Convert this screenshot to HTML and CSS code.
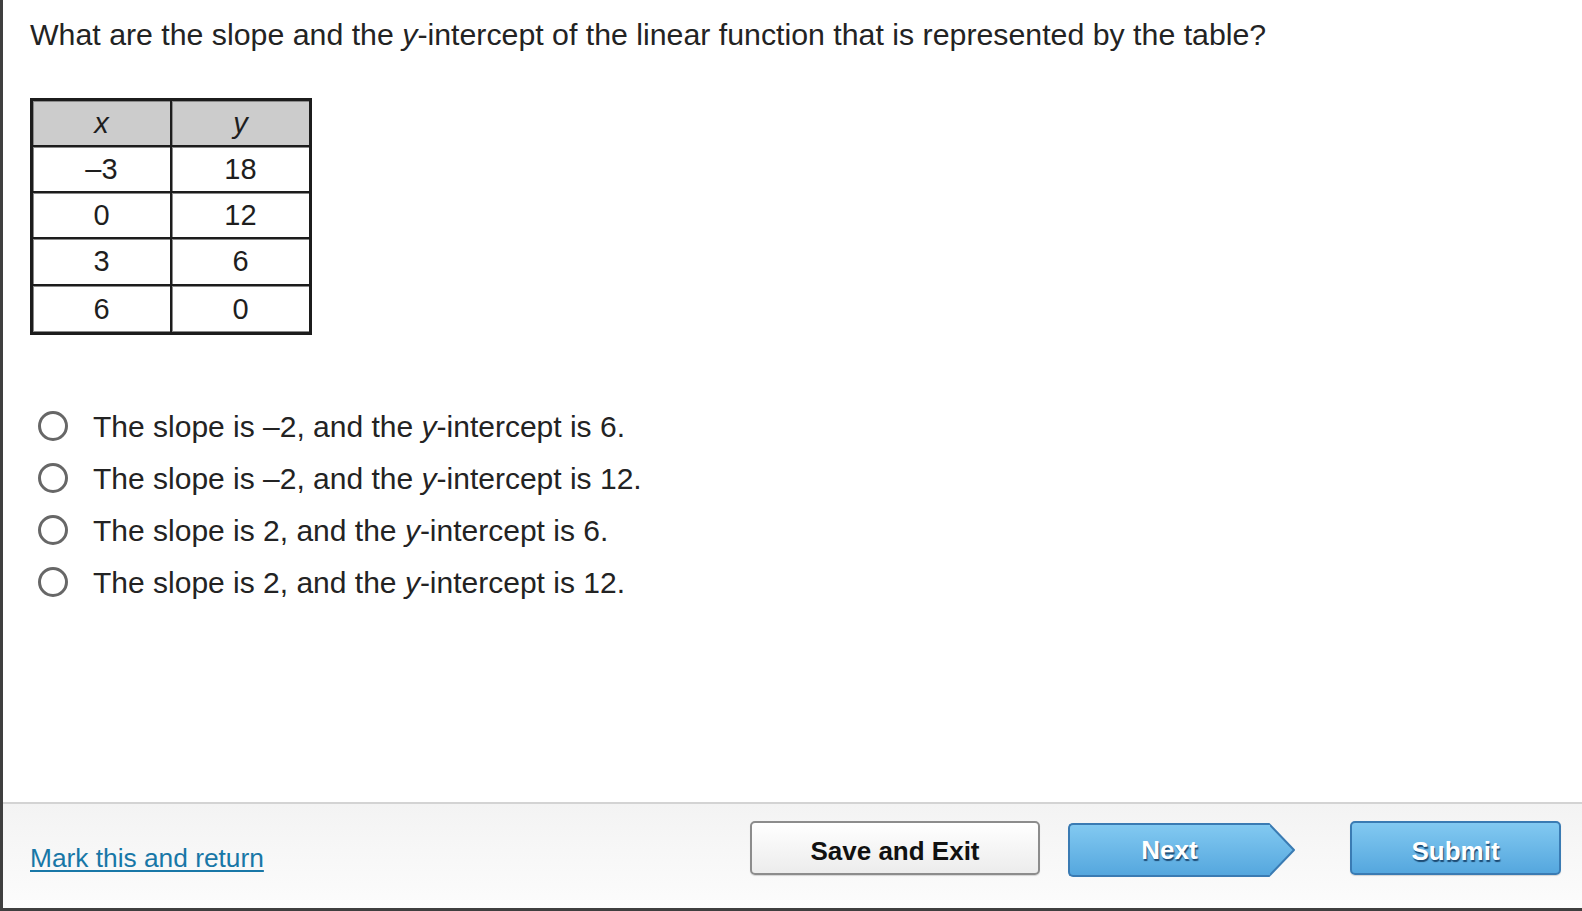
FILE: index.html
```html
<!DOCTYPE html>
<html lang="en">
<head>
<meta charset="utf-8">
<title>Question</title>
<link rel="stylesheet" href="styles.css">
</head>
<body>
<div class="frame">
  <main class="content">
    <p class="question">What are the slope and the <i>y</i>-intercept of the linear function that is represented by the table?</p>
    <table class="data">
      <thead>
        <tr><th><i>x</i></th><th><i>y</i></th></tr>
      </thead>
      <tbody>
        <tr><td>–3</td><td>18</td></tr>
        <tr><td>0</td><td>12</td></tr>
        <tr><td>3</td><td>6</td></tr>
        <tr><td>6</td><td>0</td></tr>
      </tbody>
    </table>
    <ul class="options">
      <li class="option"><span class="radio"></span><span class="label">The slope is –2, and the <i>y</i>-intercept is 6.</span></li>
      <li class="option"><span class="radio"></span><span class="label">The slope is –2, and the <i>y</i>-intercept is 12.</span></li>
      <li class="option"><span class="radio"></span><span class="label">The slope is 2, and the <i>y</i>-intercept is 6.</span></li>
      <li class="option"><span class="radio"></span><span class="label">The slope is 2, and the <i>y</i>-intercept is 12.</span></li>
    </ul>
  </main>
  <footer class="footer">
    <a class="mark" href="#">Mark this and return</a>
    <button class="btn btn-save">Save and Exit</button>
    <button class="btn-next">
      <span class="next-body">Next</span>
      <svg class="next-arrow" width="28" height="54" viewBox="0 0 28 54" aria-hidden="true">
        <defs>
          <linearGradient id="ng" x1="0" y1="0" x2="0" y2="1">
            <stop offset="0" stop-color="#82c9f1"/>
            <stop offset="1" stop-color="#55a7de"/>
          </linearGradient>
        </defs>
        <polygon points="0,1 1,1 26,27 1,53 0,53" fill="url(#ng)" stroke="#3a7bb3" stroke-width="2" stroke-linejoin="round"/>
        <rect x="0" y="2" width="2" height="50" fill="url(#ng)"/>
      </svg>
    </button>
    <button class="btn btn-submit">Submit</button>
  </footer>
</div>
</body>
</html>
```

FILE: styles.css
```css
html, body {
  margin: 0;
  padding: 0;
  background: #ffffff;
}

body {
  font-family: "Liberation Sans", Arial, Helvetica, sans-serif;
  color: #222222;
}

.frame {
  box-sizing: border-box;
  height: 911px;
  border-left: 3px solid #3f3f3f;
  border-bottom: 3px solid #3f3f3f;
  display: flex;
  flex-direction: column;
}

.content {
  flex: 1;
  padding-left: 27px;
  background: #ffffff;
}

.question {
  margin: 18px 0 0 0;
  font-size: 30.3px;
  line-height: 34px;
  color: #232323;
}

.data {
  margin-top: 46px;
  border-collapse: collapse;
  border: 3px solid #1c1c1c;
  font-size: 29px;
  color: #1e1e1e;
}

.data th,
.data td {
  width: 137px;
  padding: 0;
  text-align: center;
  border: 2px solid #1c1c1c;
  box-shadow: inset 1px 1px 0 #8a8a8a;
  font-weight: normal;
}

.data th {
  height: 44px;
  background: #cccccc;
}

.data td {
  height: 44px;
}

.data tbody tr:nth-child(3) td {
  height: 45px;
}

.data tbody tr:last-child td {
  height: 46px;
  border-bottom-width: 3px;
  box-shadow: inset 1px 1px 0 #8a8a8a, inset 0 -1px 0 #8a8a8a;
}

.options {
  list-style: none;
  margin: 66px 0 0 0;
  padding: 0;
}

.option {
  display: flex;
  align-items: flex-start;
  height: 52px;
}

.radio {
  box-sizing: border-box;
  flex: none;
  width: 30px;
  height: 30px;
  margin: 10px 0 0 8px;
  border: 3px solid #676767;
  border-radius: 50%;
}

.label {
  margin-left: 25px;
  font-size: 30px;
  line-height: 52px;
  color: #232323;
}

.footer {
  box-sizing: border-box;
  height: 106px;
  border-top: 2px solid #d3d3d3;
  background: linear-gradient(#f3f3f3, #fcfcfc);
  display: flex;
  align-items: flex-start;
  padding: 17px 21px 0 27px;
}

.mark {
  flex: 1;
  margin-top: 22px;
  font-size: 26.3px;
  line-height: 30px;
  color: #1877a7;
  text-decoration: underline;
  text-underline-offset: 3px;
}

.btn {
  box-sizing: border-box;
  height: 54px;
  border-radius: 5px;
  font-family: "Liberation Sans", Arial, Helvetica, sans-serif;
  font-weight: bold;
  font-size: 26px;
  padding: 6px 0 0 0;
  cursor: pointer;
}

.btn-save {
  width: 290px;
  border: 2px solid #8c8c8c;
  background: linear-gradient(#ffffff, #ececec);
  color: #111111;
  box-shadow: 0 1px 1px rgba(0, 0, 0, 0.15);
}

.btn-next {
  margin: 2px 0 0 28px;
  padding: 0;
  border: 0;
  background: none;
  display: flex;
  width: 228px;
  height: 54px;
  cursor: pointer;
}

.next-body {
  box-sizing: border-box;
  width: 202px;
  height: 54px;
  border: 2px solid #3a7bb3;
  border-right: 0;
  border-radius: 5px 0 0 5px;
  background: linear-gradient(#82c9f1, #55a7de);
  color: #ffffff;
  font-family: "Liberation Sans", Arial, Helvetica, sans-serif;
  font-weight: bold;
  font-size: 26px;
  line-height: 50px;
  text-align: center;
  text-shadow: 1px 2px 1px #1d4b74;
}

.next-arrow {
  display: block;
  flex: none;
  margin-left: -1px;
}

.btn-submit {
  margin-left: 54px;
  width: 211px;
  border: 2px solid #3a7bb3;
  background: linear-gradient(#82c9f1, #55a7de);
  color: #ffffff;
  text-shadow: 1px 2px 1px #1d4b74;
  box-shadow: 0 1px 1px rgba(0, 0, 0, 0.15);
}
```
